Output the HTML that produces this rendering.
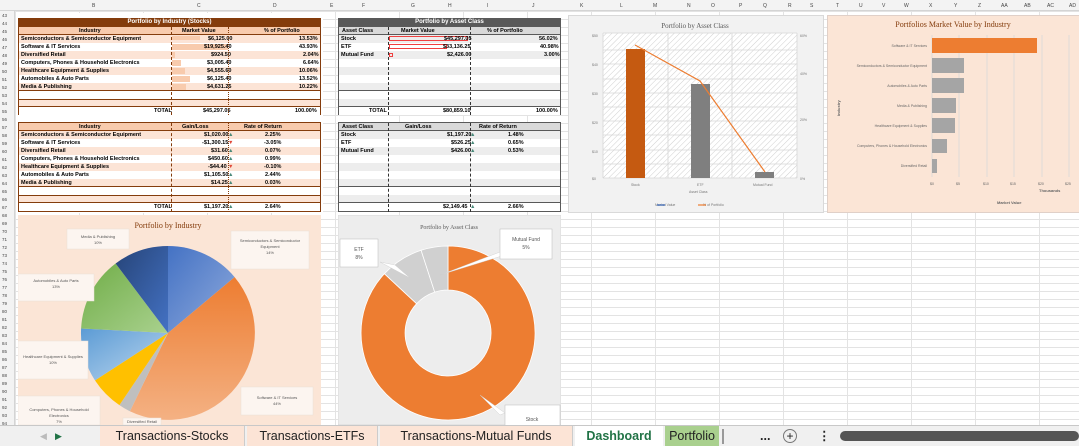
<!DOCTYPE html>
<html><head><meta charset="utf-8"><style>
*{box-sizing:border-box;margin:0;padding:0}
body{width:1079px;height:446px;overflow:hidden;background:#fff;font-family:"Liberation Sans",sans-serif;position:relative}
.a{position:absolute}
.ch{position:absolute;top:0;left:0;width:1079px;height:11px;background:#f3f3f3;border-bottom:1px solid #d4d4d4}
.rh{position:absolute;top:11px;left:0;width:15px;height:414px;background:#f3f3f3;border-right:1px solid #d4d4d4}
.grid{position:absolute;left:15px;top:11px;width:1064px;height:414px;background-image:linear-gradient(#e3e3e3 1px,transparent 1px),linear-gradient(90deg,#e3e3e3 1px,transparent 1px);background-size:100% 8px,64px 100%}
.r{position:absolute;height:8px;font-size:5.5px;font-weight:bold;line-height:8px;white-space:nowrap;overflow:hidden}
.r span{position:absolute;top:0}
.t{font-family:"Liberation Serif",serif}
</style></head><body>
<div class="ch"></div><div class="rh"></div><div class="grid"></div>
<div class="a" style="left:0;top:0;width:1079px;height:11px;font-size:5px;color:#444">
<span class="a" style="left:92px;top:3px">B</span><span class="a" style="left:197px;top:3px">C</span><span class="a" style="left:273px;top:3px">D</span><span class="a" style="left:330px;top:3px">E</span><span class="a" style="left:362px;top:3px">F</span><span class="a" style="left:411px;top:3px">G</span><span class="a" style="left:448px;top:3px">H</span><span class="a" style="left:487px;top:3px">I</span><span class="a" style="left:532px;top:3px">J</span><span class="a" style="left:580px;top:3px">K</span><span class="a" style="left:620px;top:3px">L</span><span class="a" style="left:653px;top:3px">M</span><span class="a" style="left:687px;top:3px">N</span><span class="a" style="left:711px;top:3px">O</span><span class="a" style="left:739px;top:3px">P</span><span class="a" style="left:763px;top:3px">Q</span><span class="a" style="left:788px;top:3px">R</span><span class="a" style="left:810px;top:3px">S</span><span class="a" style="left:836px;top:3px">T</span><span class="a" style="left:859px;top:3px">U</span><span class="a" style="left:882px;top:3px">V</span><span class="a" style="left:904px;top:3px">W</span><span class="a" style="left:929px;top:3px">X</span><span class="a" style="left:954px;top:3px">Y</span><span class="a" style="left:978px;top:3px">Z</span><span class="a" style="left:1001px;top:3px">AA</span><span class="a" style="left:1024px;top:3px">AB</span><span class="a" style="left:1047px;top:3px">AC</span><span class="a" style="left:1069px;top:3px">AD</span></div>
<div class="a" style="left:2px;top:12px;width:12px;font-size:4.5px;line-height:8px;color:#444">43<br>44<br>45<br>46<br>47<br>48<br>49<br>50<br>51<br>52<br>53<br>54<br>55<br>56<br>57<br>58<br>59<br>60<br>61<br>62<br>63<br>64<br>65<br>66<br>67<br>68<br>69<br>70<br>71<br>72<br>73<br>74<br>75<br>76<br>77<br>78<br>79<br>80<br>81<br>82<br>83<br>84<br>85<br>86<br>87<br>88<br>89<br>90<br>91<br>92<br>93<br>94</div>

<!-- Stocks table 1 -->
<div class="a" style="left:16px;top:13px;width:307px;height:200px;background:#fff"></div>
<div class="a" style="left:18px;top:18px;width:303px;height:97px;border:1px solid #843c0c;background:#fff"></div>
<div class="r" style="left:18px;top:18px;width:303px;height:9px;background:#843c0c;color:#fff;text-align:center;font-size:6px;line-height:9px">Portfolio by Industry (Stocks)</div>
<div class="r" style="left:19px;top:27px;width:301px;background:#f8cbad;border-bottom:1px solid #843c0c"><span style="left:60px">Industry</span><span style="left:163px">Market Value</span><span style="left:245px">% of Portfolio</span></div>
<div class="r" style="left:19px;top:35px;width:301px;background:#fce4d6"><span style="left:2px">Semiconductors &amp; Semiconductor Equipment</span><span style="left:153px;width:28px;height:4px;top:1px;background:#f8cbad"></span><span style="left:189px">$6,125.00</span><span style="left:280px">13.53%</span></div>
<div class="r" style="left:19px;top:43px;width:301px;background:#fff"><span style="left:2px">Software &amp; IT Services</span><span style="left:153px;width:56px;height:6px;top:1px;background:#f8cbad"></span><span style="left:185px">$19,925.40</span><span style="left:280px">43.93%</span></div>
<div class="r" style="left:19px;top:51px;width:301px;background:#fce4d6"><span style="left:2px">Diversified Retail</span><span style="left:153px;width:3px;height:6px;top:1px;background:#f8cbad"></span><span style="left:192px">$924.50</span><span style="left:284px">2.04%</span></div>
<div class="r" style="left:19px;top:59px;width:301px;background:#fff"><span style="left:2px">Computers, Phones &amp; Household Electronics</span><span style="left:153px;width:9px;height:6px;top:1px;background:#f8cbad"></span><span style="left:188px">$3,005.40</span><span style="left:284px">6.64%</span></div>
<div class="r" style="left:19px;top:67px;width:301px;background:#fce4d6"><span style="left:2px">Healthcare Equipment &amp; Supplies</span><span style="left:153px;width:13px;height:6px;top:1px;background:#f8cbad"></span><span style="left:188px">$4,555.60</span><span style="left:280px">10.06%</span></div>
<div class="r" style="left:19px;top:75px;width:301px;background:#fff"><span style="left:2px">Automobiles &amp; Auto Parts</span><span style="left:153px;width:18px;height:6px;top:1px;background:#f8cbad"></span><span style="left:188px">$6,125.40</span><span style="left:280px">13.52%</span></div>
<div class="r" style="left:19px;top:83px;width:301px;background:#fce4d6;border-bottom:1px solid #843c0c"><span style="left:2px">Media &amp; Publishing</span><span style="left:153px;width:14px;height:6px;top:1px;background:#f8cbad"></span><span style="left:188px">$4,631.25</span><span style="left:280px">10.22%</span></div>
<div class="r" style="left:19px;top:99px;width:301px;background:#fce4d6;border-top:1px solid #843c0c;border-bottom:1px solid #843c0c"></div>
<div class="r" style="left:19px;top:107px;width:301px;background:#fff"><span style="left:135px">TOTAL</span><span style="left:184px">$45,297.05</span><span style="left:276px">100.00%</span></div>
<div class="a" style="left:171px;top:27px;height:88px;border-left:1px dashed #843c0c"></div>
<div class="a" style="left:228px;top:27px;height:88px;border-left:1px dotted #843c0c"></div>

<!-- Stocks table 2 -->
<div class="a" style="left:18px;top:122px;width:303px;height:90px;border:1px solid #843c0c;background:#fff"></div>
<div class="r" style="left:19px;top:123px;width:301px;background:#f8cbad;border-bottom:1px solid #843c0c"><span style="left:60px">Industry</span><span style="left:163px">Gain/Loss</span><span style="left:225px">Rate of Return</span></div>
<div class="r" style="left:19px;top:131px;width:301px;background:#fce4d6"><span style="left:2px">Semiconductors &amp; Semiconductor Equipment</span><span style="left:185px">$1,020.00</span><span style="left:209px;color:#4a8a7a">▲</span><span style="left:246px">2.25%</span></div>
<div class="r" style="left:19px;top:139px;width:301px;background:#fff"><span style="left:2px">Software &amp; IT Services</span><span style="left:183px">-$1,300.15</span><span style="left:209px;color:#e04a3a">▼</span><span style="left:245px">-3.05%</span></div>
<div class="r" style="left:19px;top:147px;width:301px;background:#fce4d6"><span style="left:2px">Diversified Retail</span><span style="left:192px">$31.60</span><span style="left:209px;color:#4a8a7a">▲</span><span style="left:246px">0.07%</span></div>
<div class="r" style="left:19px;top:155px;width:301px;background:#fff"><span style="left:2px">Computers, Phones &amp; Household Electronics</span><span style="left:189px">$450.60</span><span style="left:209px;color:#4a8a7a">▲</span><span style="left:246px">0.99%</span></div>
<div class="r" style="left:19px;top:163px;width:301px;background:#fce4d6"><span style="left:2px">Healthcare Equipment &amp; Supplies</span><span style="left:189px">-$44.40</span><span style="left:209px;color:#e04a3a">▼</span><span style="left:245px">-0.10%</span></div>
<div class="r" style="left:19px;top:171px;width:301px;background:#fff"><span style="left:2px">Automobiles &amp; Auto Parts</span><span style="left:185px">$1,105.50</span><span style="left:209px;color:#4a8a7a">▲</span><span style="left:246px">2.44%</span></div>
<div class="r" style="left:19px;top:179px;width:301px;background:#fce4d6;border-bottom:1px solid #843c0c"><span style="left:2px">Media &amp; Publishing</span><span style="left:192px">$14.25</span><span style="left:209px;color:#4a8a7a">▲</span><span style="left:246px">0.03%</span></div>
<div class="r" style="left:19px;top:195px;width:301px;background:#fce4d6;border-top:1px solid #843c0c;border-bottom:1px solid #843c0c"></div>
<div class="r" style="left:19px;top:203px;width:301px;background:#fff"><span style="left:135px">TOTAL</span><span style="left:185px">$1,197.20</span><span style="left:209px;color:#4a8a7a">▲</span><span style="left:246px">2.64%</span></div>
<div class="a" style="left:171px;top:123px;height:89px;border-left:1px dashed #843c0c"></div>
<div class="a" style="left:228px;top:123px;height:89px;border-left:1px dotted #843c0c"></div>

<!-- Asset class table 1 -->
<div class="a" style="left:338px;top:18px;width:223px;height:97px;border:1px solid #595959;background:#fff"></div>
<div class="r" style="left:338px;top:18px;width:223px;height:9px;background:#595959;color:#fff;text-align:center;font-size:6px;line-height:9px">Portfolio by Asset Class</div>
<div class="r" style="left:339px;top:27px;width:221px;background:#d9d9d9;border-bottom:1px solid #595959"><span style="left:3px">Asset Class</span><span style="left:62px">Market Value</span><span style="left:148px">% of Portfolio</span></div>
<div class="r" style="left:339px;top:35px;width:221px;background:#ededed"><span style="left:50px;width:79px;height:5px;top:1px;border:1px solid #f04040"></span><span style="left:105px">$45,297.05</span><span style="left:200px">56.02%</span></div>
<div class="r" style="left:339px;top:35px;width:60px"><span style="left:2px">Stock</span></div>
<div class="r" style="left:339px;top:43px;width:221px;background:#fff"><span style="left:2px">ETF</span><span style="left:50px;width:58px;height:5px;top:1px;border:1px solid #f04040"></span><span style="left:104px">$33,136.25</span><span style="left:201px">40.98%</span></div>
<div class="r" style="left:339px;top:51px;width:221px;background:#ededed"><span style="left:2px">Mutual Fund</span><span style="left:50px;width:4px;height:4px;top:2px;border:1px solid #f04040"></span><span style="left:108px">$2,426.00</span><span style="left:205px">3.00%</span></div>
<div class="r" style="left:339px;top:67px;width:221px;background:#ededed"></div>
<div class="r" style="left:339px;top:83px;width:221px;background:#ededed;border-bottom:1px solid #595959"></div>
<div class="r" style="left:339px;top:99px;width:221px;background:#ededed;border-bottom:1px solid #595959"></div>
<div class="r" style="left:339px;top:107px;width:221px;background:#fff"><span style="left:30px">TOTAL</span><span style="left:104px">$80,859.10</span><span style="left:197px">100.00%</span></div>
<div class="a" style="left:388px;top:27px;height:88px;border-left:1px dashed #333"></div>
<div class="a" style="left:470px;top:27px;height:88px;border-left:1px dashed #333"></div>

<!-- Asset class table 2 -->
<div class="a" style="left:338px;top:122px;width:223px;height:90px;border:1px solid #595959;background:#fff"></div>
<div class="r" style="left:339px;top:123px;width:221px;background:#d9d9d9;border-bottom:1px solid #595959"><span style="left:3px">Asset Class</span><span style="left:66px">Gain/Loss</span><span style="left:140px">Rate of Return</span></div>
<div class="r" style="left:339px;top:131px;width:221px;background:#ededed"><span style="left:2px">Stock</span><span style="left:108px">$1,197.20</span><span style="left:131px;color:#4a8a7a">▲</span><span style="left:169px">1.48%</span></div>
<div class="r" style="left:339px;top:139px;width:221px;background:#fff"><span style="left:2px">ETF</span><span style="left:112px">$526.25</span><span style="left:131px;color:#4a8a7a">▲</span><span style="left:169px">0.65%</span></div>
<div class="r" style="left:339px;top:147px;width:221px;background:#ededed"><span style="left:2px">Mutual Fund</span><span style="left:112px">$426.00</span><span style="left:131px;color:#4a8a7a">▲</span><span style="left:169px">0.53%</span></div>
<div class="r" style="left:339px;top:163px;width:221px;background:#ededed"></div>
<div class="r" style="left:339px;top:179px;width:221px;background:#ededed;border-bottom:1px solid #595959"></div>
<div class="r" style="left:339px;top:195px;width:221px;background:#ededed;border-bottom:1px solid #595959"></div>
<div class="r" style="left:339px;top:203px;width:221px;background:#fff"><span style="left:104px">$2,149.45</span><span style="left:131px;color:#4a8a7a">▲</span><span style="left:169px">2.66%</span></div>
<div class="a" style="left:388px;top:123px;height:89px;border-left:1px dashed #333"></div>
<div class="a" style="left:470px;top:123px;height:89px;border-left:1px dashed #333"></div>

<!-- Column chart -->
<svg class="a" style="left:568px;top:15px" width="256" height="198" viewBox="568 15 256 198">
<defs><pattern id="h" width="4" height="4" patternUnits="userSpaceOnUse" patternTransform="rotate(45)"><line x1="0" y1="0" x2="0" y2="4" stroke="#d0d0d0" stroke-width="1"/></pattern></defs>
<rect x="568.5" y="15.5" width="255" height="197" fill="#f2f2f2" stroke="#d9d9d9"/>
<rect x="603" y="33" width="194" height="145" fill="#fff"/>
<rect x="603" y="33" width="194" height="145" fill="url(#h)"/>
<g stroke="#d6d6d6" stroke-width="0.8"><line x1="603" y1="33" x2="797" y2="33"/><line x1="603" y1="50" x2="797" y2="50"/><line x1="603" y1="64" x2="797" y2="64"/><line x1="603" y1="79" x2="797" y2="79"/><line x1="603" y1="93" x2="797" y2="93"/><line x1="603" y1="107" x2="797" y2="107"/><line x1="603" y1="121" x2="797" y2="121"/><line x1="603" y1="135" x2="797" y2="135"/><line x1="603" y1="150" x2="797" y2="150"/><line x1="603" y1="164" x2="797" y2="164"/><line x1="603" y1="178" x2="797" y2="178"/><line x1="668" y1="33" x2="668" y2="178"/><line x1="732" y1="33" x2="732" y2="178"/><line x1="797" y1="33" x2="797" y2="178"/><line x1="603" y1="33" x2="603" y2="178"/></g>
<rect x="626" y="49" width="19" height="129" fill="#c55a11"/>
<rect x="691" y="84" width="19" height="94" fill="#7f7f7f"/>
<rect x="755" y="172" width="19" height="6" fill="#7f7f7f"/>
<polyline points="635,45 700,81 765,172" fill="none" stroke="#ed7d31" stroke-width="1.2"/>
<text x="695" y="28" font-family="Liberation Serif" font-size="7" fill="#595959" text-anchor="middle">Portfolio by Asset Class</text>
<g font-size="3.5" fill="#777" font-family="Liberation Sans"><text x="592" y="37">$50</text><text x="592" y="66">$40</text><text x="592" y="95">$30</text><text x="592" y="124">$20</text><text x="592" y="153">$10</text><text x="592" y="180">$0</text>
<text x="800" y="37">60%</text><text x="800" y="75">40%</text><text x="800" y="121">20%</text><text x="800" y="180">0%</text>
<text x="631" y="186">Stock</text><text x="697" y="186">ETF</text><text x="753" y="186">Mutual Fund</text><text x="689" y="193">Asset Class</text>
<text x="655" y="206">Market Value</text><text x="703" y="206">% of Portfolio</text></g>
<line x1="657" y1="205" x2="665" y2="205" stroke="#4472c4" stroke-width="1.2"/><line x1="698" y1="205" x2="706" y2="205" stroke="#ed7d31" stroke-width="1.2"/>
</svg>

<!-- Bar chart -->
<svg class="a" style="left:827px;top:15px" width="252" height="198" viewBox="827 15 252 198">
<rect x="827.5" y="15.5" width="252" height="197" fill="#fbe5d6" stroke="#e0d0c8"/>
<g stroke="#d9d9d9" stroke-width="0.8"><line x1="932" y1="35" x2="932" y2="177"/><line x1="959" y1="35" x2="959" y2="177"/><line x1="987" y1="35" x2="987" y2="177"/><line x1="1014" y1="35" x2="1014" y2="177"/><line x1="1042" y1="35" x2="1042" y2="177"/><line x1="1069" y1="35" x2="1069" y2="177"/></g>
<rect x="932" y="38" width="105" height="15" fill="#ed7d31"/>
<rect x="932" y="58" width="32" height="15" fill="#a5a5a5"/>
<rect x="932" y="78" width="32" height="15" fill="#a5a5a5"/>
<rect x="932" y="98" width="24" height="15" fill="#a5a5a5"/>
<rect x="932" y="118" width="23" height="15" fill="#a5a5a5"/>
<rect x="932" y="139" width="15" height="14" fill="#a5a5a5"/>
<rect x="932" y="159" width="5" height="14" fill="#a5a5a5"/>
<text x="953" y="27" font-family="Liberation Serif" font-size="8" fill="#843c0c" text-anchor="middle">Portfolios Market Value by Industry</text>
<g font-size="3.5" fill="#666" text-anchor="end" font-family="Liberation Sans"><text x="927" y="47">Software &amp; IT Services</text><text x="927" y="67">Semiconductors &amp; Semiconductor Equipment</text><text x="927" y="87">Automobiles &amp; Auto Parts</text><text x="927" y="107">Media &amp; Publishing</text><text x="927" y="127">Healthcare Equipment &amp; Supplies</text><text x="927" y="147">Computers, Phones &amp; Household Electronics</text><text x="927" y="167">Diversified Retail</text></g>
<g font-size="3.5" fill="#666" font-family="Liberation Sans"><text x="930" y="185">$0</text><text x="956" y="185">$5</text><text x="983" y="185">$10</text><text x="1010" y="185">$15</text><text x="1038" y="185">$20</text><text x="1065" y="185">$25</text></g>
<text x="1039" y="192" font-size="4" font-weight="bold" fill="#666">Thousands</text>
<text x="997" y="204" font-size="4" font-weight="bold" fill="#666">Market Value</text>
<text x="840" y="116" font-size="4" font-weight="bold" fill="#666" transform="rotate(-90 840 116)">Industry</text>
</svg>

<!-- Pie chart -->
<svg class="a" style="left:18px;top:215px" width="303" height="210" viewBox="18 215 303 210">
<defs>
<linearGradient id="g1" x1="0" y1="0" x2="1" y2="1"><stop offset="0" stop-color="#4472c4"/><stop offset="1" stop-color="#8faadc"/></linearGradient>
<linearGradient id="g2" x1="0" y1="0" x2="0" y2="1"><stop offset="0" stop-color="#ed7d31"/><stop offset="1" stop-color="#f4b183"/></linearGradient>
<linearGradient id="g3" x1="0" y1="0" x2="1" y2="1"><stop offset="0" stop-color="#70ad47"/><stop offset="1" stop-color="#a9d18e"/></linearGradient>
<linearGradient id="g4" x1="0" y1="0" x2="1" y2="1"><stop offset="0" stop-color="#5b9bd5"/><stop offset="1" stop-color="#bdd7ee"/></linearGradient>
<linearGradient id="g5" x1="0" y1="0" x2="1" y2="1"><stop offset="0" stop-color="#264478"/><stop offset="1" stop-color="#4472c4"/></linearGradient>
</defs>
<rect x="18" y="215" width="303" height="210" fill="#fbe5d6"/>
<path d="M168,333 L168,246 A87,87 0 0 1 234.6,277.1 Z" fill="url(#g1)"/>
<path d="M168,333 L234.6,277.1 A87,87 0 0 1 129.9,411.2 Z" fill="url(#g2)"/>
<path d="M168,333 L129.9,411.2 A87,87 0 0 1 119.4,405.1 Z" fill="#bfbfbf"/>
<path d="M168,333 L119.4,405.1 A87,87 0 0 1 95,380.4 Z" fill="#ffc000"/>
<path d="M168,333 L95,380.4 A87,87 0 0 1 81.1,328.5 Z" fill="url(#g4)"/>
<path d="M168,333 L81.1,328.5 A87,87 0 0 1 115.6,263.5 Z" fill="url(#g3)"/>
<path d="M168,333 L115.6,263.5 A87,87 0 0 1 168,246 Z" fill="url(#g5)"/>
<text x="168" y="228" font-family="Liberation Serif" font-size="8" fill="#843c0c" text-anchor="middle">Portfolio by Industry</text>
<g fill="#fcf5f0" stroke="#eadfd8" stroke-width="0.5"><rect x="67" y="229" width="62" height="20"/><rect x="231" y="231" width="78" height="38"/><rect x="18" y="274" width="76" height="27"/><rect x="18" y="341" width="70" height="38"/><rect x="18" y="396" width="82" height="29"/><rect x="241" y="387" width="72" height="28"/><rect x="123" y="418" width="38" height="7"/></g>
<g font-size="4" fill="#555" text-anchor="middle" font-family="Liberation Sans"><text x="98" y="238">Media &amp; Publishing</text><text x="98" y="244">10%</text>
<text x="270" y="242">Semiconductors &amp; Semiconductor</text><text x="270" y="248">Equipment</text><text x="270" y="254">14%</text>
<text x="56" y="282">Automobiles &amp; Auto Parts</text><text x="56" y="288">13%</text>
<text x="53" y="358">Healthcare Equipment &amp; Supplies</text><text x="53" y="364">10%</text>
<text x="59" y="411">Computers, Phones &amp; Household</text><text x="59" y="417">Electronics</text><text x="59" y="423">7%</text>
<text x="277" y="399">Software &amp; IT Services</text><text x="277" y="405">44%</text>
<text x="142" y="423">Diversified Retail</text></g>
</svg>

<!-- Donut -->
<svg class="a" style="left:338px;top:215px" width="223" height="210" viewBox="338 215 223 210">
<rect x="338" y="215" width="223" height="210" fill="#ededed" stroke="#d9d9d9"/>
<path d="M448,246 A87,87 0 1 1 384.4,273.7 L416.6,303.7 A43,43 0 1 0 448,290 Z" fill="#ed7d31" stroke="#fff" stroke-width="0.8"/>
<path d="M384.4,273.7 A87,87 0 0 1 421.1,250.3 L434.7,292.1 A43,43 0 0 0 416.6,303.7 Z" fill="#d0d0d0" stroke="#fff" stroke-width="0.8"/>
<path d="M421.1,250.3 A87,87 0 0 1 448,246 L448,290 A43,43 0 0 0 434.7,292.1 Z" fill="#d0d0d0" stroke="#fff" stroke-width="0.8"/>
<text x="449" y="229" font-family="Liberation Serif" font-size="6" fill="#595959" text-anchor="middle">Portfolio by Asset Class</text>
<polygon points="380,262 395,265 410,278" fill="#fff" stroke="#ccc" stroke-width="0.4"/>
<polygon points="500,252 505,255 440,275" fill="#fff" stroke="#ccc" stroke-width="0.4"/>
<polygon points="480,395 505,413 500,415" fill="#fff" stroke="#ccc" stroke-width="0.4"/>
<g fill="#fff" stroke="#bbb" stroke-width="0.5"><rect x="340" y="239" width="38" height="28"/><rect x="500" y="229" width="52" height="30"/><rect x="505" y="405" width="55" height="22"/></g>
<g font-size="5" fill="#555" text-anchor="middle" font-family="Liberation Sans"><text x="359" y="251">ETF</text><text x="359" y="259">8%</text><text x="526" y="241">Mutual Fund</text><text x="526" y="249">5%</text><text x="532" y="421">Stock</text></g>
</svg>

<!-- Tab bar -->
<div class="a" style="left:0;top:425px;width:1079px;height:21px;background:#f0f0f0;border-top:1px solid #c8c8c8;font-size:12.5px;line-height:20px;color:#222">
<span class="a" style="left:40px;top:0;color:#bbb;font-size:9px">◀</span><span class="a" style="left:55px;top:0;color:#217346;font-size:9px">▶</span>
<div class="a" style="left:100px;top:0;width:145px;height:20px;background:#fce4d6;border-right:1px solid #ccc;text-align:center">Transactions-Stocks</div>
<div class="a" style="left:247px;top:0;width:131px;height:20px;background:#fce4d6;border-right:1px solid #ccc;text-align:center">Transactions-ETFs</div>
<div class="a" style="left:380px;top:0;width:193px;height:20px;background:#fce4d6;border-right:1px solid #ccc;text-align:center">Transactions-Mutual Funds</div>
<div class="a" style="left:575px;top:0;width:88px;height:20px;background:#fff;text-align:center;color:#217346;font-weight:bold">Dashboard</div>
<div class="a" style="left:665px;top:0;width:54px;height:20px;background:#a9d08e;text-align:center">Portfolio</div>
<div class="a" style="left:722px;top:3px;width:2px;height:15px;background:#999"></div>
<span class="a" style="left:760px;top:0;font-weight:bold">...</span>
<span class="a" style="left:783px;top:3px;width:14px;height:14px;border:1px solid #777;border-radius:50%;text-align:center;line-height:12px;font-size:12px">+</span>
<span class="a" style="left:818px;top:0;font-weight:bold">⋮</span>
<div class="a" style="left:840px;top:5px;width:239px;height:10px;background:#555;border-radius:5px"></div>
</div>
</body></html>
